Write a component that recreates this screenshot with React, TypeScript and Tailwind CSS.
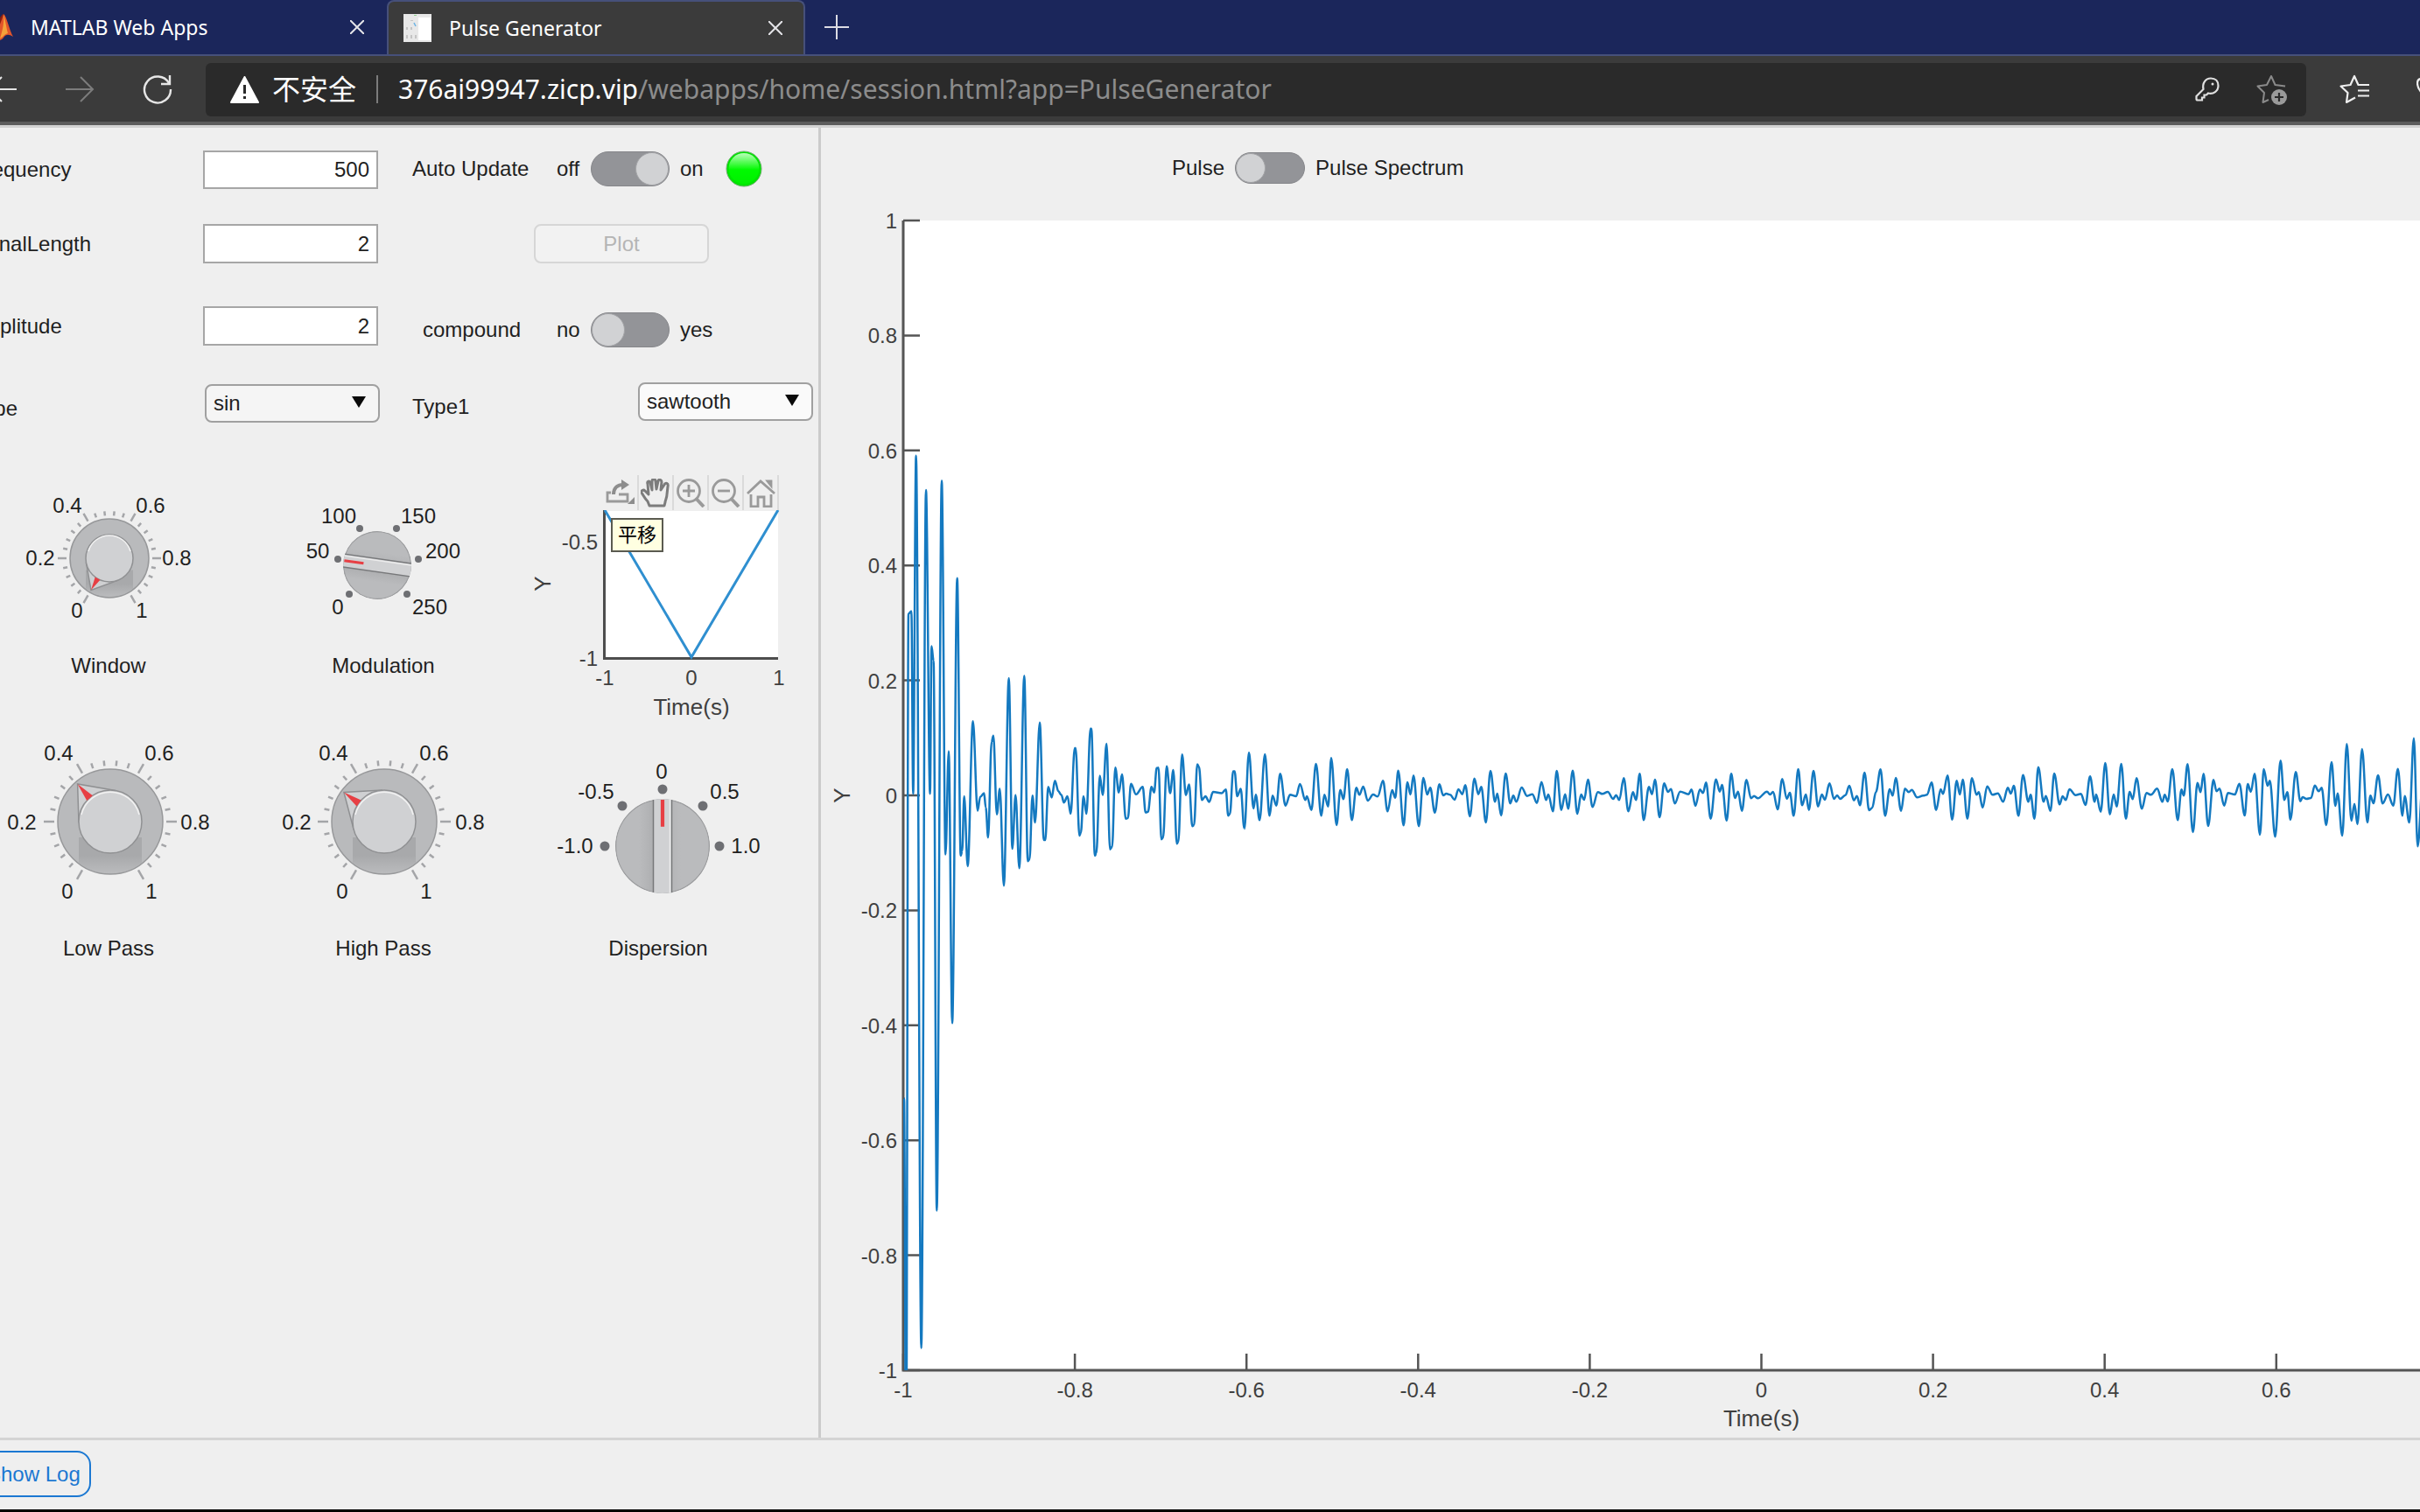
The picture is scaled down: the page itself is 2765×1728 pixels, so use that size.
import type { ReactNode } from "react";

const TEXT = "#1f1f1f";

// ---------------------------------------------------------------------------
// Browser chrome
// ---------------------------------------------------------------------------

function CloseIcon() {
  return (
    <svg width="16" height="16" viewBox="0 0 16 16" fill="none" stroke="#e4e4e8" strokeWidth="2">
      <path d="M0 0L16 16M16 0L0 16" />
    </svg>
  );
}

function MatlabIcon() {
  return (
    <svg width="32" height="32" viewBox="0 0 32 32">
      <path d="M0 19L10 15L15 20L8 25Z" fill="#4a9fd8" />
      <path d="M10 15C15 12 17 2 21 1C20 10 15 20 8 25L15 20Z" fill="#8a1f11" />
      <path d="M21 1C25 4 27 18 32 27C27 24 24 24 21 28C19 31 17 31 15 31C14 26 12 24 8 25C15 21 19 8 21 1Z" fill="#e2552a" />
      <path d="M21 2C22 10 20 20 17 29C20 28 22 24 26 23C24 16 23 6 21 2Z" fill="#f5a13a" />
    </svg>
  );
}

function PageIcon() {
  return (
    <svg width="32" height="32" viewBox="0 0 32 32">
      <rect width="32" height="32" fill="#e8e8e8" />
      <rect x="17" y="4" width="14" height="26" fill="#fff" />
      <g fill="#c4c4c4">
        <rect x="3" y="15" width="2" height="3" />
        <rect x="8" y="15" width="2" height="3" />
        <rect x="3" y="24" width="2" height="4" />
        <rect x="8" y="24" width="2" height="4" />
        <rect x="13" y="24" width="2" height="4" />
        <rect x="8" y="7" width="3" height="1" />
      </g>
      <path d="M12 10L14 14" stroke="#6cb4e4" strokeWidth="1.5" />
      <rect x="12" y="1" width="3" height="1" fill="#8fd08f" />
    </svg>
  );
}

function TabBar() {
  return (
    <div className="flex h-16 overflow-hidden border-b-2 border-[#46507a] bg-[#1b265b] text-[23px] text-white">
      <div className="flex w-[442px] shrink-0 items-center pr-[26px]">
        <div className="-ml-[17px] flex flex-1 items-center gap-5">
          <MatlabIcon />
          <span>MATLAB Web Apps</span>
        </div>
        <button type="button" aria-label="Close MATLAB Web Apps">
          <CloseIcon />
        </button>
      </div>
      <div className="-mb-[2px] flex w-[478px] shrink-0 items-center rounded-t-lg border-x-2 border-t-2 border-[#46507a] bg-[#3b3b3b] pr-6 pb-[2px] pl-[17px]">
        <div className="flex flex-1 items-center gap-5">
          <PageIcon />
          <span>Pulse Generator</span>
        </div>
        <button type="button" aria-label="Close Pulse Generator">
          <CloseIcon />
        </button>
      </div>
      <button type="button" aria-label="New tab" className="ml-[22px]">
        <svg width="28" height="28" viewBox="0 0 28 28" stroke="#dcdce4" strokeWidth="2">
          <path d="M14 0V28M0 14H28" />
        </svg>
      </button>
    </div>
  );
}

function Toolbar() {
  return (
    <div className="flex h-[75px] items-center overflow-hidden bg-[#3b3b3b] pt-[1px]">
      <div className="-ml-[14px] flex w-[249px] shrink-0 items-center">
        <button type="button" aria-label="Back" className="w-[89px]">
          <svg width="33" height="30" viewBox="0 0 33 30" fill="none" stroke="#e6e6e6" strokeWidth="2">
            <path d="M33 15H2M16 1L2 15L16 29" />
          </svg>
        </button>
        <button type="button" aria-label="Forward" className="w-[88px]">
          <svg width="33" height="30" viewBox="0 0 33 30" fill="none" stroke="#7c7c7c" strokeWidth="2">
            <path d="M0 15H31M17 1L31 15L17 29" />
          </svg>
        </button>
        <button type="button" aria-label="Refresh">
          <svg width="34" height="34" viewBox="0 0 34 34" fill="none" stroke="#e6e6e6" strokeWidth="2.4">
            <path d="M30 10A15 15 0 1 0 32 17M31 1V11H21" />
          </svg>
        </button>
      </div>
      <div className="flex h-[61px] min-w-0 flex-1 items-center rounded-md bg-[#2a2a2a] pr-[22px] pl-7 text-[30px]">
        <svg width="33" height="31" viewBox="0 0 33 31" className="shrink-0">
          <path d="M16.500 1L32 30H1Z" fill="#fff" stroke="#fff" strokeWidth="2" strokeLinejoin="round" />
          <path d="M16.500 10V20M16.500 23V26" stroke="#2a2a2a" strokeWidth="3" />
        </svg>
        <span className="ml-[15px] text-[32px] whitespace-nowrap text-white">不安全</span>
        <span className="mx-[23px] h-8 w-[2px] shrink-0 bg-[#7c7c7c]" />
        <a href="#session" className="min-w-0 flex-1 truncate text-[#8c8c8c]">
          <span className="text-white">376ai99947.zicp.vip</span>/webapps/home/session.html?app=PulseGenerator
        </a>
        <button type="button" aria-label="Saved passwords" className="mr-[42px]">
          <svg width="28" height="28" viewBox="0 0 28 28" fill="none" stroke="#e0e0e0" strokeWidth="2.200">
            <path d="M1.500 22L9.500 14C8 7 12 1.500 18 1.500C23.500 1.500 26.500 5 26.500 10C26.500 16 21 20 15 18.500L13 20.500H10.500V23.500H8V26.500H3C2 26.500 1.500 26 1.500 25Z" />
            <circle cx="20" cy="8" r="1.500" fill="#e0e0e0" stroke="none" />
          </svg>
        </button>
        <button type="button" aria-label="Add to favourites">
          <svg width="35" height="35" viewBox="0 0 35 35" fill="none" stroke="#8a8a8a" strokeWidth="2" strokeLinejoin="round">
            <path d="M33 13.500L21.500 12L17 2L12 12L1.500 13.500L9 21L7.500 32L14 29" />
            <circle cx="26" cy="26" r="9" fill="#9a9a9a" stroke="none" />
            <path d="M26 21V31M21 26H31" stroke="#2a2a2a" strokeWidth="2.200" />
          </svg>
        </button>
      </div>
      <button type="button" aria-label="Favourites" className="ml-[38px]">
        <svg width="35" height="34" viewBox="0 0 35 34" fill="none" stroke="#efefef" strokeWidth="2.200" strokeLinejoin="round">
          <path d="M34 12H21.500L17 2L12.500 12L1.500 13.500L9.500 21L8 32L18 26.500M21 18.500H34M21 24.500H34" />
        </svg>
      </button>
      <button type="button" aria-label="Collections" className="ml-[53px] w-1 shrink-0 overflow-hidden">
        <svg width="30" height="32" viewBox="0 0 30 32" fill="none" stroke="#efefef" strokeWidth="2.200">
          <path d="M6 4C3 4 1 6 1 9C1 13 3 17 6 20L20 30V4Z" />
        </svg>
      </button>
    </div>
  );
}

// ---------------------------------------------------------------------------
// Form controls
// ---------------------------------------------------------------------------

function NumberField({ id, label, value, className }: { id: string; label: string; value: string; className: string }) {
  return (
    <div className={`flex h-[45px] items-center ${className}`}>
      <label htmlFor={id} className="w-[268px]">
        {label}
      </label>
      <input
        id={id}
        defaultValue={value}
        className="h-[45px] w-[200px] border-2 border-[#a6a6a6] bg-white px-2 text-right outline-none"
      />
    </div>
  );
}

function DropDown({ id, value, options, fill }: { id: string; value: string; options: string[]; fill: string }) {
  return (
    <div className="relative h-11 w-[200px]">
      <select
        id={id}
        defaultValue={value}
        className={`h-11 w-full appearance-none rounded-lg border-2 border-[#a0a0a0] px-2 outline-none ${fill}`}
      >
        {options.map((o) => (
          <option key={o}>{o}</option>
        ))}
      </select>
      <svg width="16" height="13" viewBox="0 0 16 13" className="pointer-events-none absolute top-[14px] right-4">
        <path d="M0 0H16L8 13Z" fill="#0a0a0a" />
      </svg>
    </div>
  );
}

function Toggle({ id, checked = false, small = false }: { id: string; checked?: boolean; small?: boolean }) {
  const size = small
    ? "h-9 w-20 before:size-[34px]"
    : "h-10 w-[90px] before:size-[38px] checked:before:translate-x-[50px]";
  return (
    <input
      id={id}
      type="checkbox"
      defaultChecked={checked}
      className={`shrink-0 appearance-none rounded-full border border-[#85868a] bg-[#939498] before:block before:rounded-full before:border before:border-[#a4a5a8] before:bg-[#d1d2d4] ${size}`}
    />
  );
}

function Form() {
  return (
    <div className="-ml-8 flex pt-[25px]">
      <div className="-ml-1 flex w-[507px] shrink-0 flex-col">
        <div className="flex h-[45px] items-center">
          <label htmlFor="frequency" className="w-[268px] pl-1">
            Frequency
          </label>
          <input
            id="frequency"
            defaultValue="500"
            className="h-11 w-[200px] border-2 border-[#a6a6a6] bg-white px-2 text-right outline-none"
          />
        </div>
        <NumberField id="length" label="SignalLength" value="2" className="mt-10" />
        <NumberField id="amplitude" label="Amplitude" value="2" className="mt-[49px]" />
        <div className="mt-11 flex h-11 items-end">
          <label htmlFor="type" className="w-[270px] pl-1 leading-8">
            Type
          </label>
          <DropDown id="type" value="sin" options={["sin", "square", "sawtooth"]} fill="bg-[#f5f5f5]" />
        </div>
      </div>

      <div className="flex w-[458px] shrink-0 flex-col">
        <div className="flex h-11 items-center">
          <label htmlFor="auto" className="w-[165px]">
            Auto Update
          </label>
          <span className="w-[39px]">off</span>
          <Toggle id="auto" checked />
          <span className="ml-3 w-[52px]">on</span>
          <svg width="42" height="42" viewBox="0 0 42 42">
            <defs>
              <linearGradient id="led" x1="0" y1="0" x2="0" y2="1">
                <stop offset="0" stopColor="#b9ffb9" />
                <stop offset="0.550" stopColor="#00fa00" />
                <stop offset="1" stopColor="#00f000" />
              </linearGradient>
            </defs>
            <circle cx="21" cy="21" r="20" fill="#00e400" stroke="#6fae6f" strokeWidth="1" />
            <circle cx="21" cy="20.500" r="17.500" fill="url(#led)" />
          </svg>
        </div>
        <button
          type="button"
          disabled
          className="mt-[41px] ml-[139px] h-[45px] w-[200px] rounded-lg border-2 border-[#d6d6d6] bg-[#f2f2f2] text-[#b5b5b5]"
        >
          Plot
        </button>
        <div className="mt-[54px] flex h-11 items-center">
          <label htmlFor="compound" className="w-[165px] pl-3">
            compound
          </label>
          <span className="w-[39px]">no</span>
          <Toggle id="compound" />
          <span className="ml-3">yes</span>
        </div>
        <div className="mt-[38px] flex h-11 items-end justify-between">
          <label htmlFor="type1" className="leading-8">
            Type1
          </label>
          <DropDown id="type1" value="sawtooth" options={["sawtooth", "sin", "square"]} fill="bg-[#fafafa]" />
        </div>
      </div>
    </div>
  );
}

// ---------------------------------------------------------------------------
// Dials
// ---------------------------------------------------------------------------

type Mark = { x: number; y: number; text: string; anchor?: "start" | "middle" | "end" };

function DialCell({ label, height, children }: { label: string; height: string; children: ReactNode }) {
  return (
    <label className="flex flex-col items-center">
      <span className={`relative block w-full ${height}`}>
        <svg className="size-full" aria-hidden>
          {children}
        </svg>
        <input type="range" className="absolute inset-0 size-full opacity-0" />
      </span>
      <span className="leading-8">{label}</span>
    </label>
  );
}

function Marks({ marks }: { marks: Mark[] }) {
  return (
    <g fontSize="24" fill={TEXT}>
      {marks.map((m) => (
        <text key={m.text} x={m.x} y={m.y} textAnchor={m.anchor ?? "middle"}>
          {m.text}
        </text>
      ))}
    </g>
  );
}

const polar = (r: number, deg: number) => {
  const a = (deg * Math.PI) / 180;
  return [r * Math.sin(a), -r * Math.cos(a)] as const;
};

// Continuous knob: 26 ticks over 300 degrees, the pointer drawn as two tangents to the cap.
function Knob({ id, cx, cy, r, cap, tick, angle }: { id: string; cx: number; cy: number; r: number; cap: number; tick: number; angle: number }) {
  const tip = r - 3;
  const spread = (Math.acos(cap / tip) * 180) / Math.PI;
  const [tx, ty] = polar(tip, angle);
  const [ax, ay] = polar(cap, angle - spread);
  const [bx, by] = polar(cap, angle + spread);
  const [px, py] = polar(cap, angle - 7);
  const [qx, qy] = polar(cap, angle + 7);

  return (
    <g transform={`translate(${cx} ${cy})`}>
      <defs>
        <linearGradient id={`${id}-shade`} x1="0" y1="0" x2="0" y2="1">
          <stop offset="0.500" stopColor="#a8a9ab" />
          <stop offset="0.950" stopColor="#b9babc" />
        </linearGradient>
        <clipPath id={`${id}-clip`}>
          <circle r={r - 1} />
        </clipPath>
      </defs>
      {Array.from({ length: 26 }, (_, i) => {
        const major = i % 5 === 0;
        const a = -150 + i * 12;
        const [x1, y1] = polar(r + 4, a);
        const [x2, y2] = polar(r + 4 + (major ? tick : tick / 2), a);
        return <line key={i} x1={x1} y1={y1} x2={x2} y2={y2} stroke="#a4a5a8" strokeWidth="2.500" />;
      })}
      <circle r={r} fill="#b9babc" stroke="#97989a" strokeWidth="1.500" />
      <rect x={-cap} y={cap / 2} width={cap * 2} height={r - cap / 2} fill={`url(#${id}-shade)`} clipPath={`url(#${id}-clip)`} />
      <path d={`M${ax} ${ay}L${tx} ${ty}L${bx} ${by}`} fill="#cfd0d2" stroke="#8f9092" strokeWidth="1.500" />
      <circle r={cap} fill="#d0d1d3" stroke="#909193" strokeWidth="1.500" />
      <path d={`M${-cap + 3} -8A${cap - 2} ${cap - 2} 0 0 1 ${cap - 3} -8`} fill="none" stroke="#f2f2f2" strokeWidth="1.500" />
      <path d={`M${tx} ${ty}L${px} ${py}L${qx} ${qy}Z`} fill="#e73f44" />
    </g>
  );
}

// Stepped knob: a bar across the disc, with one dot for each position.
function StepKnob({ id, cx, cy, r, bar, angle, dots, dot }: { id: string; cx: number; cy: number; r: number; bar: number; angle: number; dots: [number, number][]; dot: number }) {
  return (
    <g>
      <defs>
        <clipPath id={`${id}-clip`}>
          <circle r={r} />
        </clipPath>
        <linearGradient id={`${id}-disc`}>
          <stop offset="0" stopColor="#babbbd" />
          <stop offset="0.250" stopColor="#babbbd" />
          <stop offset="0.420" stopColor="#adaeb0" />
          <stop offset="0.580" stopColor="#b4b5b7" />
          <stop offset="0.700" stopColor="#babbbd" />
        </linearGradient>
      </defs>
      {dots.map(([x, y]) => (
        <circle key={`${x}-${y}`} cx={x} cy={y} r={dot} fill="#6e6f73" />
      ))}
      <g transform={`translate(${cx} ${cy}) rotate(${angle})`} clipPath={`url(#${id}-clip)`}>
        <circle r={r - 0.5} fill={`url(#${id}-disc)`} stroke="#9b9c9e" strokeWidth="1.500" />
        <rect x={-bar / 2} y={-r - 1} width={bar} height={r * 2 + 2} fill="#d0d1d3" stroke="#77787a" strokeWidth="1.500" />
        <path d={`M${bar / 2 - 2} ${-r}V${r}`} stroke="#ececec" strokeWidth="1.500" />
        <rect x={-bar / 10} y={-r + 1} width={bar / 5} height={r * 0.57} fill="#e73f44" />
      </g>
    </g>
  );
}

const toolButtons: { name: string; icon: ReactNode }[] = [
  {
    name: "Export",
    icon: (
      <>
        <path d="M6 16H2V26H25V18H15" />
        <path d="M9 18C9 10 14 7 20 7" strokeWidth="4" stroke="#8d8d8d" />
        <path d="M18 1L27 7L18 13Z" fill="#8d8d8d" stroke="none" />
        <path d="M33 21V29H25Z" fill="#8d8d8d" stroke="none" />
      </>
    ),
  },
  {
    name: "Pan",
    icon: (
      <path
        d="M10 31L8 26C5 23 3 19 1 16C0 14 3 12 5 14L9 18L8 6C7 3 10 2 11 5L13 13V3C13 0 17 0 17 3L18 12L20 3C20 0 24 1 24 4L23 13L27 7C28 4 32 5 31 9L30 18C30 22 28 25 28 27L27 31Z"
        strokeWidth="3"
        strokeLinejoin="round"
        stroke="#7c7c7c"
      />
    ),
  },
  {
    name: "Zoom in",
    icon: (
      <>
        <circle cx="15" cy="14" r="12.500" />
        <path d="M23.500 23L32 32" strokeWidth="4" />
        <path d="M8 14H22M15 7V21" />
      </>
    ),
  },
  {
    name: "Zoom out",
    icon: (
      <>
        <circle cx="15" cy="14" r="12.500" />
        <path d="M23.500 23L32 32" strokeWidth="4" />
        <path d="M8 14H22" />
      </>
    ),
  },
  {
    name: "Restore view",
    icon: (
      <>
        <path d="M2 17L17 3L33 17" />
        <path d="M6 18V32H14V21H21V32H29V18" />
        <path d="M25 3H29V8Z" fill="#a0a0a0" />
      </>
    ),
  },
];

function SmallPlot() {
  return (
    <div className="relative">
      <div className="flex h-10 pl-[95px]">
        {toolButtons.map((b) => (
          <button
            key={b.name}
            type="button"
            aria-label={b.name}
            className="flex w-10 items-center justify-center border-r-2 border-[#dadada]"
          >
            <svg width="34" height="33" viewBox="0 0 34 33" fill="none" stroke="#9a9a9a" strokeWidth="2.800">
              {b.icon}
            </svg>
          </button>
        ))}
      </div>
      <svg className="h-[250px] w-full" fontSize="24" fill="#3f3f3f">
        <rect x="95" y="1" width="199" height="168" fill="#fff" />
        <path d="M95.500 0V170M94 169.500H294" stroke="#4d4d4d" strokeWidth="3" />
        <path d="M96 0L195 168L294 0" fill="none" stroke="#2f8fd0" strokeWidth="3" />
        <text x="88" y="45" textAnchor="end">-0.5</text>
        <text x="88" y="178" textAnchor="end">-1</text>
        <text x="96" y="200" textAnchor="middle">-1</text>
        <text x="195" y="200" textAnchor="middle">0</text>
        <text x="295" y="200" textAnchor="middle">1</text>
        <text x="195" y="234" textAnchor="middle" fontSize="26">Time(s)</text>
        <text transform="translate(34 84) rotate(-90)" textAnchor="middle" fontSize="26">Y</text>
      </svg>
      <div className="absolute top-[49px] left-[103px] border-2 border-[#5a5a50] bg-[#ffffe1] px-[6px] text-[22px] leading-[35px] text-black">
        平移
      </div>
    </div>
  );
}

const passMarks: Mark[] = [
  { x: 100, y: 28, text: "0.4" },
  { x: 215, y: 28, text: "0.6" },
  { x: 58, y: 107, text: "0.2" },
  { x: 256, y: 107, text: "0.8" },
  { x: 110, y: 186, text: "0" },
  { x: 206, y: 186, text: "1" },
];

function Dials() {
  return (
    <div className="mt-[60px] -ml-[33px] grid grid-cols-[314px_314px_314px] grid-rows-[298px_auto] items-start">
      <DialCell label="Window" height="h-[202px]">
        <Knob id="window" cx={158} cy={95} r={45} cap={27} tick={10} angle={-150} />
        <Marks
          marks={[
            { x: 110, y: 43, text: "0.4" },
            { x: 205, y: 43, text: "0.6" },
            { x: 79, y: 103, text: "0.2" },
            { x: 235, y: 103, text: "0.8" },
            { x: 121, y: 163, text: "0" },
            { x: 195, y: 163, text: "1" },
          ]}
        />
      </DialCell>
      <DialCell label="Modulation" height="h-[202px]">
        <StepKnob
          id="modulation"
          cx={150}
          cy={103}
          r={39}
          bar={15}
          angle={-82}
          dot={4}
          dots={[[118, 136], [105, 96], [130, 61], [172, 61], [197, 96], [184, 136]]}
        />
        <Marks
          marks={[
            { x: 105, y: 159, text: "0" },
            { x: 82, y: 95, text: "50" },
            { x: 106, y: 55, text: "100" },
            { x: 197, y: 55, text: "150" },
            { x: 225, y: 95, text: "200" },
            { x: 210, y: 159, text: "250" },
          ]}
        />
      </DialCell>
      <SmallPlot />

      <DialCell label="Low Pass" height="h-[227px]">
        <Knob id="low" cx={159} cy={98} r={60} cap={36} tick={12} angle={-41} />
        <Marks marks={passMarks} />
      </DialCell>
      <DialCell label="High Pass" height="h-[227px]">
        <Knob id="high" cx={158} cy={98} r={60} cap={36} tick={12} angle={-54} />
        <Marks marks={passMarks} />
      </DialCell>
      <DialCell label="Dispersion" height="h-[227px]">
        <StepKnob
          id="dispersion"
          cx={162}
          cy={126}
          r={54}
          bar={21}
          angle={0}
          dot={5.5}
          dots={[[96, 126], [116, 80], [162, 61], [208, 80], [227, 126]]}
        />
        <Marks
          marks={[
            { x: 62, y: 134, text: "-1.0" },
            { x: 86, y: 72, text: "-0.5" },
            { x: 161, y: 49, text: "0" },
            { x: 233, y: 72, text: "0.5" },
            { x: 257, y: 134, text: "1.0" },
          ]}
        />
      </DialCell>
    </div>
  );
}

// ---------------------------------------------------------------------------
// Main plot
// ---------------------------------------------------------------------------

// First part of the pulse, sampled finely.
const onset =
  "309,1085 316,1700 324,310 334,306 340,598 350,57 368,1485 384,112 398,598 403,362 410,385 421,1265 438,97 451,695 462,530 474,965 491,253 503,697 508,690 515,602 527,714 545,482 561,625 570,603 583,597 589,620 597,668 609,515 615,505 627,631 637,590 651,745 668,413 680,686 691,600 704,717 721,409 733,706 739,703 749,601 758,644 774,484 788,672 793,672 803,587 815,604 826,577 838,594 848,600 857,612 869,602 880,630 894,525 897,525 910,665 915,660 924,602 934,630 948,494 951,494 963,697 968,693 980,569 990,600 1003,518 1015,687 1022,683 1033,556 1045,596 1056,567 1069,638 1076,637 1087,582 1104,599 1127,587 1137,628 1145,627 1157,587 1166,596 1175,557 1181,556 1191,671 1197,668 1209,554 1221,597 1232,560 1244,678 1249,675 1262,535 1275,600 1286,583 1297,650 1303,648 1314,551 1320,555 1330,608 1342,602 1355,611 1368,595 1398,597 1412,591 1420,633 1426,630 1437,562 1442,562 1451,602 1463,590 1475,653";

// The rest of it, up to the edge of the view.
const tail =
  "25,502 31,240 37,432 40,385 45,472 52,246 58,457 62,388 67,422 72,313 79,422 85,385 93,390 98,348 105,403 107,390 113,437 119,279 126,457 130,385 135,425 139,259 146,489 151,368 155,400 160,297 166,472 172,361 176,385 181,357 187,405 194,384 200,391 207,337 213,442 219,369 223,395 227,302 234,490 239,342 243,384 247,319 254,493 260,327 265,384 269,361 275,446 281,349 286,387 290,381 295,385 301,402 306,366 311,383 315,352 321,459 327,329 332,383 336,358 342,480 348,303 354,409 357,381 362,456 368,312 374,415 378,388 382,409 389,360 396,389 403,383 409,413 415,341 421,403 424,384 430,442 435,303 441,437 446,383 450,433 456,302 462,450 467,384 471,402 476,333 482,427 489,376 495,382 502,375 509,399 513,386 517,403 523,328 529,442 535,376 539,403 544,313 549,472 556,358 560,383 564,333 570,462 576,346 581,375 585,365 590,415 597,374 608,383 612,367 617,423 623,367 627,379 631,343 637,467 644,332 649,374 652,351 658,473 664,313 669,396 673,374 678,440 684,334 690,397 694,389 699,397 711,374 715,384 719,375 725,435 731,331 737,399 741,378 746,457 752,297 757,421 762,384 766,437 772,303 778,425 783,384 787,402 793,346 799,399 803,387 807,399 814,386 819,354 825,404 829,389 833,421 839,309 845,438 849,430 854,375 860,298 866,457 872,366 876,388 880,327 887,440 892,364 897,376 901,368 908,394 916,388 921,385 927,343 933,437 939,366 942,382 948,319 954,470 960,337 964,384 968,333 974,467 980,328 986,385 989,376 994,429 1000,356 1007,385 1014,380 1021,409 1027,361 1031,381 1035,354 1041,457 1047,317 1054,409 1057,385 1062,467 1067,290 1074,409 1077,389 1083,440 1088,312 1095,418 1099,390 1103,403 1108,366 1116,386 1123,382 1129,420 1135,322 1141,409 1143,384 1149,443 1155,276 1161,452 1166,384 1170,425 1176,279 1182,467 1187,375 1191,400 1196,328 1203,433 1209,379 1215,385 1223,364 1230,409 1233,385 1237,408 1243,297 1250,472 1255,367 1258,388 1263,280 1270,513 1276,344 1280,376 1284,313 1290,492 1297,334 1301,373 1305,364 1311,422 1316,379 1325,384 1331,347 1338,456 1342,348 1346,375 1351,313 1358,522 1363,297 1368,354 1371,337 1378,529 1385,268 1390,403 1394,376 1398,470 1405,307 1411,407 1414,393 1419,399 1425,396 1430,353 1435,373 1439,361 1445,489 1452,273 1457,423 1460,380 1466,525 1472,211 1478,474 1482,416 1486,486 1492,228 1499,480 1503,388 1507,414 1513,318 1519,415 1526,384 1533,422 1539,296 1545,457 1548,389 1554,480 1560,191 1565,562 1572,330";

function smooth(points: string) {
  const pts = points.split(" ").map((p) => p.split(",").map(Number));
  return pts
    .map(([x, y], i) => {
      if (i === 0) return `M${x} ${y}`;
      const [px, py] = pts[i - 1];
      const d = (x - px) * 0.36;
      return `C${px + d} ${py} ${x - d} ${y} ${x} ${y}`;
    })
    .join("");
}

const PLOT_W = 1961;
const PLOT_H = 1314;
const ticks = Array.from({ length: 11 }, (_, i) => ({ at: i / 10, text: String((i * 2 - 10) / 10) }));

function MainPlot() {
  return (
    <svg className="h-[1430px] w-full" fontSize="24" fill="#3f3f3f">
      <defs>
        <clipPath id="axes">
          <rect x="0" y="0" width={PLOT_W} height={PLOT_H} />
        </clipPath>
      </defs>
      <g transform="translate(94 40)">
        <rect width={PLOT_W} height={PLOT_H} fill="#fff" />
        <g stroke="#555" strokeWidth="3">
          <path d={`M0 0V${PLOT_H}H${PLOT_W}`} fill="none" />
          {ticks.map((t) => (
            <path key={t.text} d={`M0 ${PLOT_H * (1 - t.at)}h19M${PLOT_W * t.at} ${PLOT_H}v-19`} strokeWidth="2.500" />
          ))}
        </g>
        {ticks.map((t) => (
          <g key={t.text}>
            <text x="-7" y={PLOT_H * (1 - t.at) + 9} textAnchor="end">
              {t.text}
            </text>
            <text x={PLOT_W * t.at} y={PLOT_H + 31} textAnchor="middle">
              {t.text}
            </text>
          </g>
        ))}
        <g fill="none" stroke="#1479c0" strokeWidth="2.500" strokeLinejoin="round" clipPath="url(#axes)">
          <path d={smooth(onset)} transform="translate(-102 228) scale(0.3333 0.7143)" vectorEffect="non-scaling-stroke" />
          <path d={smooth(tail)} transform="translate(368 528) scale(0.8705 0.3333)" vectorEffect="non-scaling-stroke" />
        </g>
        <text x={PLOT_W / 2} y={PLOT_H + 64} textAnchor="middle" fontSize="26">
          Time(s)
        </text>
        <text transform={`translate(-61 ${PLOT_H / 2}) rotate(-90)`} textAnchor="middle" fontSize="26">
          Y
        </text>
      </g>
    </svg>
  );
}

export default function App() {
  return (
    <div className="flex min-h-screen flex-col overflow-hidden bg-[#efefef] font-['Liberation_Sans',Arial,'Noto_Sans_CJK_SC',sans-serif] text-2xl text-[#1f1f1f]">
      <header className="font-['Noto_Sans','Noto_Sans_CJK_SC',sans-serif]">
        <TabBar />
        <Toolbar />
      </header>
      <div className="h-[7px] border-t-4 border-b-3 border-t-[#5c5c5c] border-b-[#d2d2d2]" />

      <main className="flex flex-1">
        <section className="w-[938px] shrink-0 overflow-hidden border-r-3 border-[#cbcbcb]">
          <Form />
          <Dials />
        </section>
        <section className="min-w-0 flex-1 overflow-hidden pt-[26px]">
          <div className="flex h-10 items-center gap-3 pl-[401px]">
            <label htmlFor="spectrum">Pulse</label>
            <Toggle id="spectrum" small />
            <span>Pulse Spectrum</span>
          </div>
          <MainPlot />
        </section>
      </main>

      <footer className="h-[85px] border-t-3 border-b-3 border-t-[#d4d4d4] border-b-black pt-3">
        <button
          type="button"
          className="-ml-[27px] h-[53px] rounded-2xl border-2 border-[#1b78d2] px-[10px] text-[#1b78d2]"
        >
          Show Log
        </button>
      </footer>
    </div>
  );
}
